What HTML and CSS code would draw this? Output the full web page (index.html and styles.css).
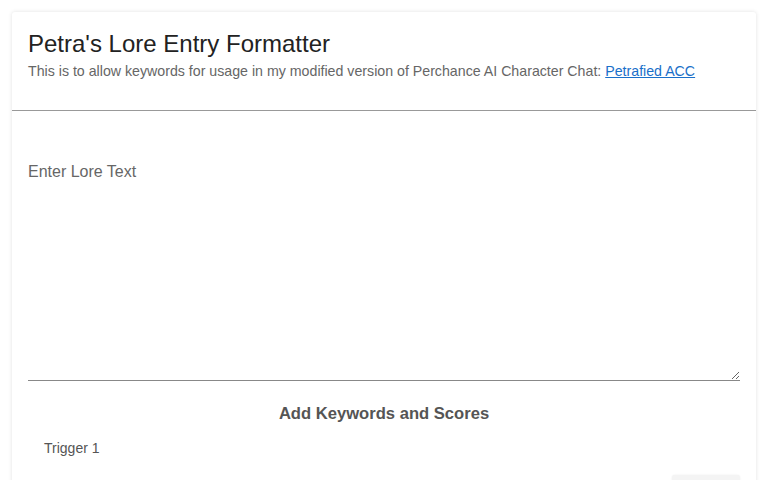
FILE: index.html
```html
<!DOCTYPE html>
<html lang="en">
<head>
<meta charset="utf-8">
<title>Petra's Lore Entry Formatter</title>
<link rel="stylesheet" href="styles.css">
</head>
<body>
<div class="card">
  <header class="card-header">
    <h1 class="title">Petra's Lore Entry Formatter</h1>
    <p class="subtitle">This is to allow keywords for usage in my modified version of Perchance AI Character Chat: <a href="#" class="link">Petrafied ACC</a></p>
  </header>
  <main class="card-body">
    <textarea class="lore-input" placeholder="Enter Lore Text"></textarea>
    <h2 class="section-title">Add Keywords and Scores</h2>
    <div class="trigger">
      <div class="trigger-label">Trigger 1</div>
      <div class="trigger-actions"><button class="btn" aria-label="Remove trigger"></button></div>
    </div>
  </main>
</div>
</body>
</html>
```
FILE: styles.css
```css
html, body {
  margin: 0;
  padding: 0;
  background: #ffffff;
  font-family: "Liberation Sans", Arial, sans-serif;
}
body {
  padding: 12px;
}
.card {
  background: #fff;
  box-shadow: 0 0 4px rgba(0,0,0,0.12);
  border-radius: 3px;
}
.card-header {
  padding: 18px 16px 0 16px;
  border-bottom: 1px solid #999;
}
.title {
  margin: 0;
  font-size: 24px;
  font-weight: normal;
  color: #222;
  line-height: 28px;
}
.subtitle {
  margin: 5px 0 0 0;
  padding-bottom: 31px;
  font-size: 14.2px;
  line-height: 16px;
  color: #666;
}
.link {
  color: #1a6fc9;
  text-decoration: underline;
}
.card-body {
  padding: 40px 16px 0 16px;
}
.lore-input {
  display: block;
  box-sizing: border-box;
  width: 100%;
  height: 230px;
  margin: 0;
  padding: 12px 0;
  border: none;
  border-bottom: 1px solid #888;
  font-family: "Liberation Sans", Arial, sans-serif;
  font-size: 16px;
  line-height: 18px;
  color: #333;
  background: transparent;
  outline: none;
}
.lore-input::placeholder {
  color: #666;
}
.section-title {
  margin: 23px 0 0 0;
  text-align: center;
  font-size: 16.6px;
  line-height: 20px;
  color: #555;
  font-weight: bold;
}
.trigger {
  padding: 16px 16px 0 16px;
}
.trigger-label {
  font-size: 14px;
  line-height: 16px;
  color: #555;
}
.trigger-actions {
  display: flex;
  justify-content: flex-end;
  margin-top: 19px;
  margin-right: -16px;
}
.btn {
  width: 68px;
  height: 30px;
  border: none;
  border-radius: 3px;
  background: #f4f4f4;
  box-shadow: 0 0 2px rgba(0,0,0,0.08);
  padding: 0;
}
```
